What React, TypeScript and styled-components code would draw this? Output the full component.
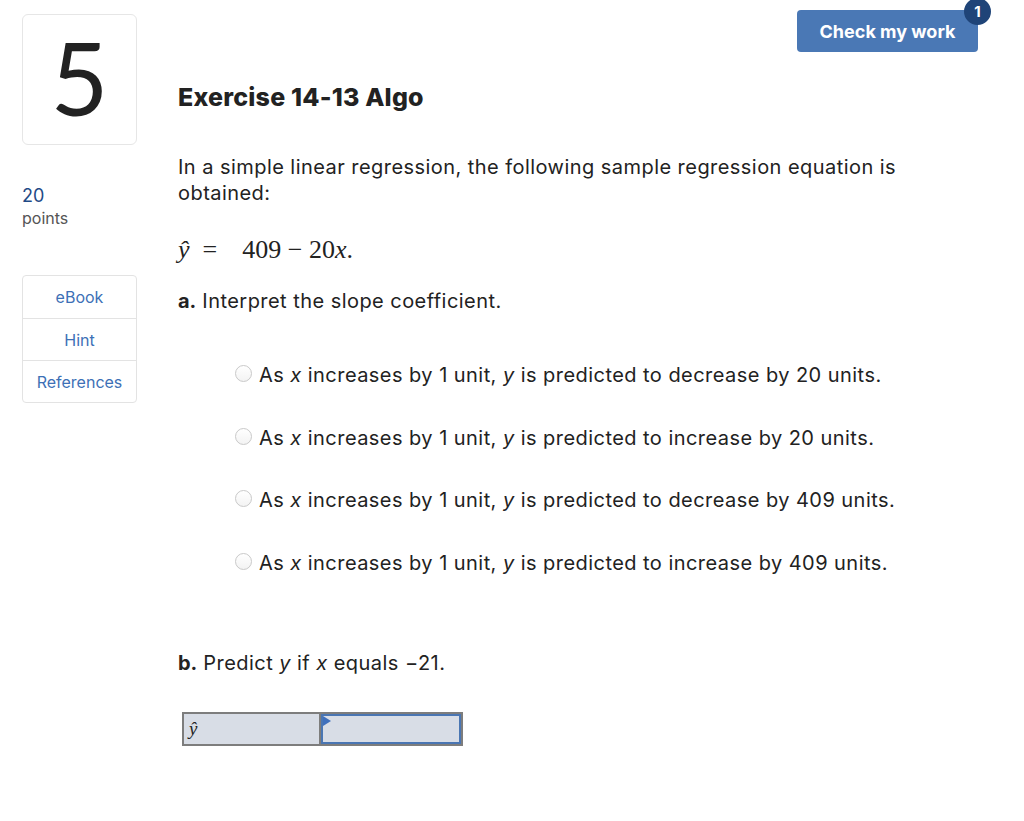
import React from "react";
import styled, { createGlobalStyle } from "styled-components";

const Global = createGlobalStyle`
  html, body { margin: 0; padding: 0; background: #fff; }
  body { font-family: "Inter", "Lato", sans-serif; color: #222; }
  * { box-sizing: border-box; }
`;

const Page = styled.div`
  width: 1024px;
  height: 821px;
  position: relative;
  display: grid;
  grid-template-columns: 115px 1fr;
  align-items: start;
  column-gap: 41px;
  padding: 14px 0 0 22px;
`;

const Side = styled.aside`
  display: flex;
  flex-direction: column;
`;

const NumberCard = styled.div`
  width: 115px;
  height: 131px;
  border: 1px solid #e6e6e6;
  border-radius: 6px;
  display: flex;
  align-items: center;
  justify-content: center;
  font-family: "Lato", sans-serif;
  font-weight: 400;
  font-size: 100px;
  line-height: 1;
  color: #222;
  padding-bottom: 6px;
`;

const Points = styled.div`
  margin-top: 40px;
  font-size: 18px;
  color: #1f4a86;
  line-height: 22px;
`;

const PointsLabel = styled.div`
  font-size: 16px;
  color: #555;
  line-height: 22px;
`;

const LinkBox = styled.div`
  margin-top: 46px;
  width: 115px;
  border: 1px solid #e3e3e3;
  border-radius: 4px;
  display: flex;
  flex-direction: column;
`;

const LinkItem = styled.div`
  height: 42px;
  display: flex;
  align-items: center;
  justify-content: center;
  font-size: 16px;
  color: #3d70b6;
  & + & { border-top: 1px solid #e3e3e3; }
`;

const Main = styled.main`
  display: flex;
  flex-direction: column;
  padding-top: 68px;
`;

const Title = styled.h1`
  margin: 0;
  font-size: 25px;
  font-weight: 800;
  letter-spacing: 0.2px;
  color: #222;
  line-height: 30px;
`;

const Para = styled.p`
  margin: 42px 0 0;
  font-size: 20px;
  letter-spacing: 0.45px;
  line-height: 26px;
  width: 740px;
  color: #222;
`;

const Equation = styled.div`
  margin-top: 30px;
  font-family: "Liberation Serif", "DejaVu Serif", serif;
  font-size: 26px;
  line-height: 28px;
  color: #222;
  display: flex;
  align-items: baseline;
`;

const Hat = styled.span`
  font-style: italic;
  margin-right: 13px;
`;

const Eq = styled.span`
  margin-right: 25px;
`;

const Question = styled.div`
  margin-top: 24px;
  font-size: 20px;
  letter-spacing: 0.45px;
  line-height: 26px;
  color: #222;
  b { font-weight: 700; letter-spacing: 0; }
`;

const Options = styled.div`
  margin-top: 48px;
  padding-left: 57px;
  display: flex;
  flex-direction: column;
  gap: 36.5px;
`;

const Option = styled.label`
  display: flex;
  align-items: center;
  font-size: 20px;
  letter-spacing: 0.45px;
  line-height: 26px;
  color: #222;
  i { font-style: italic; }
`;

const Radio = styled.span`
  width: 17px;
  height: 17px;
  border-radius: 50%;
  border: 1px solid #c9c9c9;
  background: linear-gradient(#fff, #f3f3f3);
  margin-right: 7px;
  flex: none;
  margin-top: -3px;
`;

const PartB = styled(Question)`
  margin-top: 74px;
`;

const AnswerTable = styled.div`
  margin-top: 36px;
  margin-left: 4px;
  display: flex;
  width: 281px;
  height: 34px;
  border: 2px solid #7d7d7d;
  background: #d8dde6;
`;

const LabelCell = styled.div`
  width: 137px;
  border-right: 2px solid #7d7d7d;
  display: flex;
  align-items: center;
  padding-left: 5px;
  font-family: "Liberation Serif", serif;
  font-style: italic;
  font-size: 19px;
  color: #222;
`;

const InputCell = styled.div`
  flex: 1;
  position: relative;
  border: 2px solid #4a76b3;
  background: #d8dde6;
`;

const Corner = styled.span`
  position: absolute;
  left: 0;
  top: 0;
  width: 0;
  height: 0;
  border-top: 5px solid transparent;
  border-bottom: 5px solid transparent;
  border-left: 8px solid #3f70bd;
`;

const CheckButton = styled.button`
  position: absolute;
  top: 10px;
  left: 797px;
  width: 181px;
  height: 42px;
  border: none;
  border-radius: 4px;
  background: #4a78b5;
  color: #fff;
  font-family: "Inter", sans-serif;
  font-weight: 700;
  font-size: 18px;
  padding: 0;
`;

const Badge = styled.span`
  position: absolute;
  top: -12px;
  right: -13px;
  width: 27px;
  height: 27px;
  border-radius: 50%;
  background: #1f4478;
  color: #fff;
  font-size: 15px;
  font-weight: 700;
  display: flex;
  align-items: center;
  justify-content: center;
`;

const options = [
  "decrease by 20 units.",
  "increase by 20 units.",
  "decrease by 409 units.",
  "increase by 409 units.",
];

export default function App() {
  return (
    <>
      <Global />
      <Page>
        <Side>
          <NumberCard>5</NumberCard>
          <Points>20</Points>
          <PointsLabel>points</PointsLabel>
          <LinkBox>
            <LinkItem>eBook</LinkItem>
            <LinkItem>Hint</LinkItem>
            <LinkItem>References</LinkItem>
          </LinkBox>
        </Side>
        <Main>
          <Title>Exercise 14-13 Algo</Title>
          <Para>
            In a simple linear regression, the following sample regression equation is obtained:
          </Para>
          <Equation>
            <Hat>ŷ</Hat>
            <Eq>=</Eq>
            <span>409 − 20</span>
            <i>x</i>
            <span>.</span>
          </Equation>
          <Question>
            <b>a.</b> Interpret the slope coefficient.
          </Question>
          <Options>
            {options.map((o) => (
              <Option key={o}>
                <Radio />
                <span>
                  As <i>x</i> increases by 1 unit, <i>y</i> is predicted to {o}
                </span>
              </Option>
            ))}
          </Options>
          <PartB>
            <b>b.</b> Predict <i>y</i> if <i>x</i> equals −21.
          </PartB>
          <AnswerTable>
            <LabelCell>ŷ</LabelCell>
            <InputCell>
              <Corner />
            </InputCell>
          </AnswerTable>
        </Main>
        <CheckButton>
          Check my work
          <Badge>1</Badge>
        </CheckButton>
      </Page>
    </>
  );
}
